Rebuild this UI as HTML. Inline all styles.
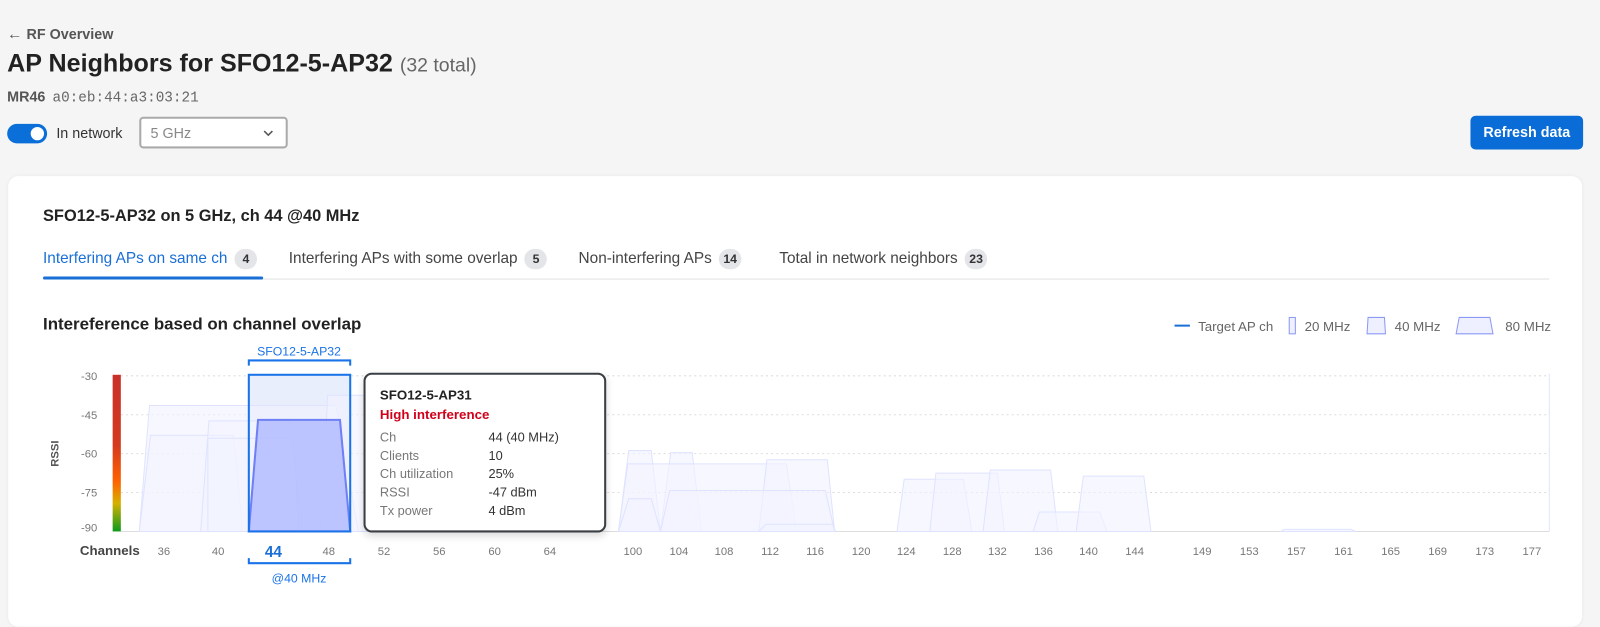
<!DOCTYPE html>
<html><head><meta charset="utf-8"><style>
*{margin:0;padding:0;box-sizing:border-box}
body{width:1600px;height:598px;overflow:hidden;background:#f5f5f5;font-family:"Liberation Sans",sans-serif}
#w{position:absolute;left:0;top:0;width:1563px;height:584px;transform:scale(1.024);transform-origin:0 0}
.a{position:absolute;white-space:nowrap}
.badge{display:inline-block;background:#e3e5e9;border-radius:10px;min-width:22px;height:20px;line-height:20px;text-align:center;font-size:12px;color:#333;margin-left:7px;padding:0 4px;font-weight:bold}
.tab{position:absolute;top:243px;font-size:15px;color:#444;height:20px;line-height:20px}
.tt{font-size:12.5px;color:#777}
.tv{font-size:12.5px;color:#333}
</style></head><body><div id="w">
<div class="a" style="left:7px;top:25px;font-size:14px;color:#555;font-weight:bold"><span style="font-weight:normal;font-size:15px">←</span> RF Overview</div>
<div class="a" style="left:7px;top:49px;font-size:24.5px;font-weight:bold;color:#222">AP Neighbors for SFO12-5-AP32 <span style="font-size:19px;font-weight:normal;color:#666">(32 total)</span></div>
<div class="a" style="left:7px;top:86px;font-size:14px;color:#555;font-weight:bold">MR46 <span style="font-family:'Liberation Mono',monospace;font-weight:normal;color:#666;font-size:14px;margin-left:3px">a0:eb:44:a3:03:21</span></div>
<div class="a" style="left:7px;top:121px;width:39px;height:19px;border-radius:10px;background:#0a6fd8"><div style="position:absolute;right:3px;top:3px;width:13px;height:13px;border-radius:50%;background:#fff"></div></div>
<div class="a" style="left:55px;top:122px;font-size:14px;color:#333">In network</div>
<div class="a" style="left:136px;top:114px;width:145px;height:31px;border:2px solid #aaa;border-radius:4px;background:#fff"><span style="position:absolute;left:9px;top:6px;font-size:14px;color:#888">5 GHz</span><svg style="position:absolute;left:119px;top:10px" width="10" height="8"><path d="M1 2l4 4 4-4" fill="none" stroke="#555" stroke-width="1.5"/></svg></div>
<div class="a" style="left:1436px;top:113px;width:110px;height:33px;border-radius:5px;background:#0a6cd6;color:#fff;font-weight:bold;font-size:14px;text-align:center;line-height:33px">Refresh data</div>
<div class="a" style="left:8px;top:172px;width:1537px;height:440px;background:#fff;border-radius:10px;box-shadow:0 0 3px rgba(0,0,0,.06)"></div>
<div class="a" style="left:42px;top:203px;font-size:16px;color:#222;font-weight:bold">SFO12-5-AP32 on 5 GHz, ch 44 @40 MHz</div>
<div class="tab" style="left:42px;color:#1a6fd6">Interfering APs on same ch<span class="badge">4</span></div>
<div class="tab" style="left:282px">Interfering APs with some overlap<span class="badge">5</span></div>
<div class="tab" style="left:565px">Non-interfering APs<span class="badge">14</span></div>
<div class="tab" style="left:761px">Total in network neighbors<span class="badge">23</span></div>
<div class="a" style="left:42px;top:272px;width:1471px;height:1px;background:#e2e2e2"></div>
<div class="a" style="left:42px;top:270px;width:215px;height:3px;background:#1a6fd6;border-radius:2px"></div>
<div class="a" style="left:42px;top:308px;font-size:16.5px;color:#222;font-weight:bold">Intereference based on channel overlap</div>
<svg class="a" style="left:0;top:300px" width="1563" height="284">
<g transform="translate(0,-300)" font-family="Liberation Sans" >
<g transform="translate(-5,0)">
<line x1="1152" y1="318" x2="1167" y2="318" stroke="#1a6fd6" stroke-width="2"/>
<text x="1175" y="323" font-size="13" fill="#666">Target AP ch</text>
<rect x="1264" y="310" width="6" height="16" fill="#eef0ff" stroke="#8c98f5"/>
<text x="1279" y="323" font-size="13" fill="#666">20 MHz</text>
<path d="M1340 326 L1341 310 L1357 310 L1358 326Z" fill="#eef0ff" stroke="#8c98f5"/>
<text x="1367" y="323" font-size="13" fill="#666">40 MHz</text>
<path d="M1427 326 L1430 310 L1460 310 L1463 326Z" fill="#eef0ff" stroke="#8c98f5"/>
<text x="1475" y="323" font-size="13" fill="#666">80 MHz</text>
</g>
<g stroke="#ddd" stroke-dasharray="2 3">
<line x1="118" y1="367" x2="1513" y2="367"/><line x1="118" y1="405" x2="1513" y2="405"/><line x1="118" y1="443" x2="1513" y2="443"/><line x1="118" y1="481" x2="1513" y2="481"/></g>
<line x1="118" y1="519" x2="1513" y2="519" stroke="#ddd"/>
<line x1="1513" y1="365" x2="1513" y2="519" stroke="#e0e4ff"/>
<defs><linearGradient id="g" x1="0" y1="0" x2="0" y2="1"><stop offset="0" stop-color="#c9302a"/><stop offset=".45" stop-color="#d43a1e"/><stop offset=".68" stop-color="#ff6200"/><stop offset=".82" stop-color="#d6b000"/><stop offset="1" stop-color="#0c9a1c"/></linearGradient></defs>
<rect x="110" y="366" width="8" height="153" fill="url(#g)"/>
<g font-size="11" fill="#777" text-anchor="end"><text x="95" y="371">-30</text><text x="95" y="409">-45</text><text x="95" y="447">-60</text><text x="95" y="485">-75</text><text x="95" y="519">-90</text></g>
<text transform="translate(57,443) rotate(-90)" font-size="11" fill="#555" text-anchor="middle" font-weight="bold">RSSI</text>
<rect x="242" y="366" width="100" height="153" fill="#e8eefb"/>
<g fill="#f2f3ff" fill-opacity=".6" stroke="#dfe3ff">
<path d="M136 519 L146 396 L328 396 L350 519Z"/>
<path d="M136 519 L147 425 L228 425 L237 519Z"/>
<path d="M196 519 L204 411 L282 411 L296 519Z"/>
<path d="M203 519 L203 428 L287 428 L292 519Z"/>
<path d="M313 519 L320 386 L360 386 L360 519Z"/>
<path d="M604 519 L614 440 L636 440 L645 519Z"/>
<path d="M645 519 L655 442 L676 442 L685 519Z"/>
<path d="M604 519 L613 453 L768 453 L778 519Z"/>
<path d="M741 519 L749 449 L808 449 L815 519Z"/>
<path d="M645 519 L654 479 L806 479 L815 519Z"/>
<path d="M604 519 L614 487 L636 487 L645 519Z"/>
<path d="M741 519 L748 512 L813 512 L816 519Z"/>
<path d="M876 519 L883 468 L941 468 L949 519Z"/>
<path d="M908 519 L914 462 L974 462 L981 519Z"/>
<path d="M960 519 L967 459 L1026 459 L1033 519Z"/>
<path d="M1009 519 L1015 500 L1074 500 L1081 519Z"/>
<path d="M1051 519 L1058 465 L1117 465 L1124 519Z"/>
<path d="M1251 519 L1254 517 L1319 517 L1324 519Z"/>
</g>
<path d="M243 519 L252 410 L332 410 L342 519Z" fill="#b3bcff" fill-opacity=".85" stroke="#6f7ff5" stroke-width="2"/>
<rect x="243" y="366" width="99" height="153" fill="none" stroke="#1a73e8" stroke-width="2"/>
<path d="M243 357 L243 352 L342 352 L342 357" fill="none" stroke="#1a73e8" stroke-width="2"/>
<text x="292" y="347" font-size="12" fill="#1a73e8" text-anchor="middle">SFO12-5-AP32</text>
<path d="M243 545 L243 550 L342 550 L342 545" fill="none" stroke="#1a73e8" stroke-width="2"/>
<text x="292" y="569" font-size="12" fill="#1a73e8" text-anchor="middle">@40 MHz</text>
<text x="78" y="542" font-size="13" fill="#444" font-weight="bold">Channels</text>
<g font-size="11" fill="#777" text-anchor="middle">
<text x="160" y="542">36</text><text x="213" y="542">40</text><text x="321" y="542">48</text><text x="375" y="542">52</text><text x="429" y="542">56</text><text x="483" y="542">60</text><text x="537" y="542">64</text>
<text x="618" y="542">100</text><text x="663" y="542">104</text><text x="707" y="542">108</text><text x="752" y="542">112</text><text x="796" y="542">116</text><text x="841" y="542">120</text><text x="885" y="542">124</text><text x="930" y="542">128</text><text x="974" y="542">132</text><text x="1019" y="542">136</text><text x="1063" y="542">140</text><text x="1108" y="542">144</text>
<text x="1174" y="542">149</text><text x="1220" y="542">153</text><text x="1266" y="542">157</text><text x="1312" y="542">161</text><text x="1358" y="542">165</text><text x="1404" y="542">169</text><text x="1450" y="542">173</text><text x="1496" y="542">177</text></g>
<text x="267" y="544" font-size="15" fill="#1a6fd6" font-weight="bold" text-anchor="middle">44</text>
</g></svg>
<div class="a" style="left:355px;top:364px;width:237px;height:156px;background:#fff;border:2px solid #3a3f44;border-radius:8px;box-shadow:0 3px 8px rgba(0,0,0,.15)">
<div class="a" style="left:14px;top:12px;font-size:13px;font-weight:bold;color:#222">SFO12-5-AP31</div>
<div class="a" style="left:14px;top:31px;font-size:13px;font-weight:bold;color:#d0021b">High interference</div>
<div class="a tt" style="left:14px;top:54px">Ch</div><div class="a tv" style="left:120px;top:54px">44 (40 MHz)</div>
<div class="a tt" style="left:14px;top:72px">Clients</div><div class="a tv" style="left:120px;top:72px">10</div>
<div class="a tt" style="left:14px;top:90px">Ch utilization</div><div class="a tv" style="left:120px;top:90px">25%</div>
<div class="a tt" style="left:14px;top:108px">RSSI</div><div class="a tv" style="left:120px;top:108px">-47 dBm</div>
<div class="a tt" style="left:14px;top:126px">Tx power</div><div class="a tv" style="left:120px;top:126px">4 dBm</div>
</div>
</div></body></html>
